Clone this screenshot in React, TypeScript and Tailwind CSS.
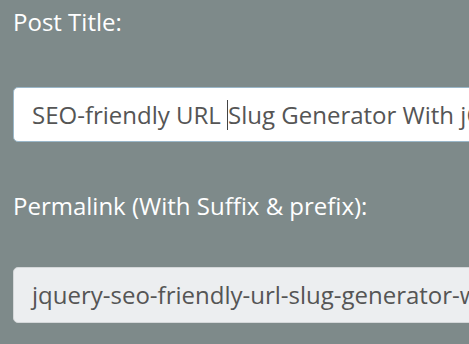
export default function App() {
  return (
    <div
      className="h-[344px] w-[469px] overflow-hidden bg-[#7e8a8a] pl-[13px]"
      style={{ fontFamily: '"Open Sans", sans-serif' }}
    >
      <label className="block pt-[5px] text-[24px] leading-[34px] text-white">Post Title:</label>
      <div className="mt-[48px] flex h-[55px] w-[600px] items-center whitespace-pre rounded-[5px] border border-[#9ab7c9] bg-white pl-[18px] text-[24px] text-[#555]">
        <span>SEO-friendly URL </span>
        <span className="h-[30px] w-px bg-[#444]" />
        <span>Slug Generator With jQuery</span>
      </div>
      <label className="mt-[47px] block text-[24px] leading-[34px] text-white">
        Permalink (With Suffix &amp; prefix):
      </label>
      <div className="mt-[44px] flex h-[56px] w-[600px] items-center whitespace-pre rounded-[5px] border border-[#d4d7d9] bg-[#eceef0] pl-[18px] text-[24px] text-[#555]">
        jquery-seo-friendly-url-slug-generator-with-jquery
      </div>
    </div>
  );
}
